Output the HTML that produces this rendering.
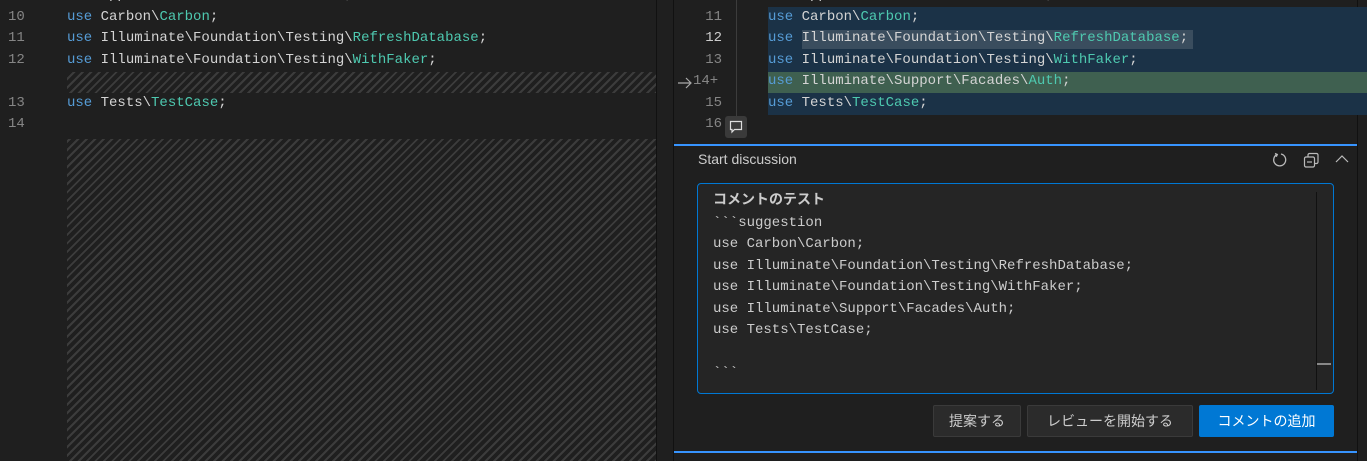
<!DOCTYPE html>
<html><head><meta charset="utf-8"><style>
*{margin:0;padding:0;box-sizing:border-box}
body{width:1367px;height:461px;background:#1f1f1f;overflow:hidden;position:relative;font-family:"Liberation Mono","Noto Sans CJK JP",monospace;font-size:14px;color:#d4d4d4}
.a{position:absolute;white-space:pre;line-height:21.5px;height:21.5px}
.k{color:#569cd6}.t{color:#4ec9b0}
.n{color:#858585;font-size:14px}
.hatch{position:absolute;background:repeating-linear-gradient(-45deg,#3c3c3c 0 2px,#1f1f1f 2px 6px)}
.ui{font-family:"Liberation Sans","Noto Sans CJK JP",sans-serif}
.btn{position:absolute;top:405px;height:32px;border-radius:2px;font-family:"Liberation Sans","Noto Sans CJK JP",sans-serif;font-size:14px;line-height:30px;text-align:center;color:#ccc;background:#2b2b2b;border:1px solid #3a3a3a}
</style></head><body>
<div class="a n" style="left:8px;top:-15px">9</div>
<div class="a" style="left:67px;top:-15px"><span class="k">use</span> App\Models\Client\<span class="t">UnderMotion</span>;</div>
<div class="a n" style="left:8px;top:6.5px">10</div>
<div class="a" style="left:67px;top:6.5px"><span class="k">use</span> Carbon\<span class="t">Carbon</span>;</div>
<div class="a n" style="left:8px;top:28px">11</div>
<div class="a" style="left:67px;top:28px"><span class="k">use</span> Illuminate\Foundation\Testing\<span class="t">RefreshDatabase</span>;</div>
<div class="a n" style="left:8px;top:49.5px">12</div>
<div class="a" style="left:67px;top:49.5px"><span class="k">use</span> Illuminate\Foundation\Testing\<span class="t">WithFaker</span>;</div>
<div class="hatch" style="left:67px;top:72px;width:590px;height:21px"></div>
<div class="a n" style="left:8px;top:92.5px">13</div>
<div class="a" style="left:67px;top:92.5px"><span class="k">use</span> Tests\<span class="t">TestCase</span>;</div>
<div class="a n" style="left:8px;top:114px">14</div>
<div class="hatch" style="left:67px;top:139px;width:590px;height:322px"></div>
<div style="position:absolute;left:656px;top:0;width:1px;height:461px;background:#111"></div>
<div style="position:absolute;left:673px;top:0;width:1px;height:461px;background:#111"></div>
<div style="position:absolute;left:1357px;top:0;width:1px;height:461px;background:#111"></div>
<div style="position:absolute;left:768px;top:7px;width:599px;height:108px;background:#1b3247"></div>
<div style="position:absolute;left:768px;top:72px;width:599px;height:21px;background:#3f6050"></div>
<div style="position:absolute;left:802px;top:30px;width:391px;height:19px;background:#3a4d5e"></div>
<div style="position:absolute;left:736px;top:0;width:1px;height:118px;background:#3c3c3c"></div>
<div class="a n" style="left:680px;top:-15px;width:42px;text-align:right">10</div>
<div class="a" style="left:768px;top:-15px"><span class="k">use</span> App\Models\Client\<span class="t">UnderMotion</span>;</div>
<div class="a n" style="left:680px;top:6.5px;width:42px;text-align:right">11</div>
<div class="a" style="left:768px;top:6.5px"><span class="k">use</span> Carbon\<span class="t">Carbon</span>;</div>
<div class="a n" style="left:680px;top:28px;width:42px;text-align:right;color:#ccc">12</div>
<div class="a" style="left:768px;top:28px"><span class="k">use</span> Illuminate\Foundation\Testing\<span class="t">RefreshDatabase</span>;</div>
<div class="a n" style="left:680px;top:49.5px;width:42px;text-align:right">13</div>
<div class="a" style="left:768px;top:49.5px"><span class="k">use</span> Illuminate\Foundation\Testing\<span class="t">WithFaker</span>;</div>
<svg style="position:absolute;left:677px;top:76px" width="16" height="14" viewBox="0 0 16 14"><path d="M1 7h13M9 2l5 5-5 5" fill="none" stroke="#aaa" stroke-width="1.2"/></svg>
<div class="a n" style="left:693px;top:71px">14+</div>
<div class="a" style="left:768px;top:71px"><span class="k">use</span> Illuminate\Support\Facades\<span class="t">Auth</span>;</div>
<div class="a n" style="left:680px;top:92.5px;width:42px;text-align:right">15</div>
<div class="a" style="left:768px;top:92.5px"><span class="k">use</span> Tests\<span class="t">TestCase</span>;</div>
<div class="a n" style="left:680px;top:114px;width:42px;text-align:right">16</div>
<div style="position:absolute;left:725px;top:116px;width:22px;height:22px;background:#3a3a3a;border-radius:3px"></div>
<svg style="position:absolute;left:729px;top:120px" width="14" height="14" viewBox="0 0 14 14"><path d="M1.5 1.5h11v8h-7l-2.5 2.5v-2.5h-1.5z" fill="none" stroke="#ddd" stroke-width="1.2"/></svg>
<div style="position:absolute;left:674px;top:144px;width:683px;height:2px;background:#3794ff"></div>
<div class="ui" style="position:absolute;left:698px;top:151px;font-size:14px;color:#ccc">Start discussion</div>
<svg style="position:absolute;left:1271px;top:151px" width="18" height="18" viewBox="0 0 18 18"><path d="M6 3.5A6 6 0 1 0 10 3" fill="none" stroke="#bbb" stroke-width="1.3"/><path d="M4 2.5l2.3 1-1 2.3" fill="none" stroke="#bbb" stroke-width="1.3"/></svg>
<svg style="position:absolute;left:1303px;top:152px" width="17" height="17" viewBox="0 0 17 17"><rect x="5" y="1.5" width="10" height="10" rx="1.5" fill="none" stroke="#bbb" stroke-width="1.2"/><rect x="1.5" y="5" width="10" height="10" rx="1.5" fill="#1f1f1f" stroke="#bbb" stroke-width="1.2"/><path d="M4 10h5" stroke="#bbb" stroke-width="1.2"/></svg>
<svg style="position:absolute;left:1335px;top:154px" width="14" height="10" viewBox="0 0 14 10"><path d="M1 8l6-6 6 6" fill="none" stroke="#bbb" stroke-width="1.2"/></svg>
<div style="position:absolute;left:697px;top:183px;width:637px;height:211px;border:1px solid #0078d4;border-radius:4px;background:#252525"></div>
<div style="position:absolute;left:1316px;top:192px;width:15px;height:198px;border-left:1px solid #111"></div>
<div style="position:absolute;left:1317px;top:363px;width:14px;height:2px;background:#888"></div>
<div class="a" style="left:713px;top:191px;color:#ccc;font-weight:bold">コメントのテスト</div>
<div class="a" style="left:713px;top:212.5px;color:#ccc">&#96;&#96;&#96;suggestion</div>
<div class="a" style="left:713px;top:234px;color:#ccc">use Carbon\Carbon;</div>
<div class="a" style="left:713px;top:255.5px;color:#ccc">use Illuminate\Foundation\Testing\RefreshDatabase;</div>
<div class="a" style="left:713px;top:277px;color:#ccc">use Illuminate\Foundation\Testing\WithFaker;</div>
<div class="a" style="left:713px;top:298.5px;color:#ccc">use Illuminate\Support\Facades\Auth;</div>
<div class="a" style="left:713px;top:320px;color:#ccc">use Tests\TestCase;</div>
<div class="a" style="left:713px;top:363px;color:#ccc">&#96;&#96;&#96;</div>
<div class="btn" style="left:933px;width:88px">提案する</div>
<div class="btn" style="left:1027px;width:166px">レビューを開始する</div>
<div class="btn" style="left:1199px;width:135px;background:#0078d4;border-color:#0078d4;color:#fff">コメントの追加</div>
<div style="position:absolute;left:674px;top:451px;width:683px;height:2px;background:#3794ff"></div>
</body></html>
